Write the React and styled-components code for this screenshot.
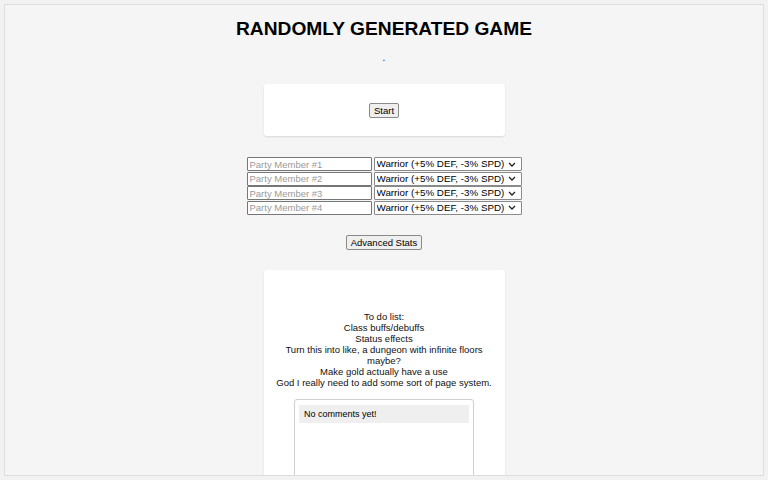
import React from 'react';
import styled, { createGlobalStyle } from 'styled-components';

const classes = [
  'Warrior (+5% DEF, -3% SPD)',
  'Mage (+5% MAG, -3% DEF)',
  'Rogue (+5% SPD, -3% ATK)',
  'Cleric (+5% HP, -3% ATK)',
];

const todo = [
  'To do list:',
  'Class buffs/debuffs',
  'Status effects',
  'Turn this into like, a dungeon with infinite floors maybe?',
  'Make gold actually have a use',
  'God I really need to add some sort of page system.',
];

const chevron =
  "url(\"data:image/svg+xml,%3Csvg xmlns='http://www.w3.org/2000/svg' width='8' height='5' viewBox='0 0 8 5'%3E%3Cpath d='M1 1l3 3 3-3' fill='none' stroke='%23222' stroke-width='1.3'/%3E%3C/svg%3E\")";

function App() {
  return (
    <>
      <GlobalStyle />
      <Frame>
        <Title>RANDOMLY GENERATED GAME</Title>
        <Dot>.</Dot>
        <Card $height={52} $top={20}>
          <Button>Start</Button>
        </Card>
        <Party>
          {[1, 2, 3, 4].map((n) => (
            <PartyRow key={n}>
              <NameInput placeholder={`Party Member #${n}`} />
              <ClassSelect defaultValue={classes[0]}>
                {classes.map((c) => (
                  <option key={c}>{c}</option>
                ))}
              </ClassSelect>
            </PartyRow>
          ))}
        </Party>
        <Button $top={20}>Advanced Stats</Button>
        <Card $top={20} $pad="41px 8px 0">
          <Notes>
            {todo.map((line) => (
              <div key={line}>{line}</div>
            ))}
          </Notes>
          <Comments>
            <CommentBar>No comments yet!</CommentBar>
          </Comments>
        </Card>
      </Frame>
    </>
  );
}

const GlobalStyle = createGlobalStyle`
  html, body {
    margin: 0;
    padding: 0;
    height: 480px;
    overflow: hidden;
    background: #f2f2f2;
  }
  body {
    font-family: 'Liberation Sans', Arial, sans-serif;
    color: #111;
  }
`;

const Frame = styled.div`
  box-sizing: border-box;
  margin: 4px;
  height: 472px;
  border: 1px solid #dcdcdc;
  background: #f5f5f5;
  overflow: hidden;
  display: flex;
  flex-direction: column;
  align-items: center;
`;

const Title = styled.h1`
  margin: 12px 0 0;
  font-size: 19.2px;
  line-height: 23px;
  font-weight: 700;
  color: #000;
`;

const Dot = styled.div`
  margin-top: 12px;
  font-size: 10px;
  line-height: 12px;
`;

const Card = styled.div`
  box-sizing: border-box;
  width: 241px;
  margin-top: ${(p) => p.$top || 0}px;
  ${(p) => (p.$height ? `height: ${p.$height}px;` : '')}
  padding: ${(p) => p.$pad || '0'};
  background: #fff;
  border-radius: 3px;
  box-shadow: 0 1px 2px rgba(0, 0, 0, 0.12);
  display: flex;
  flex-direction: column;
  align-items: center;
  justify-content: ${(p) => (p.$height ? 'center' : 'flex-start')};
  flex-shrink: 0;
`;

const Button = styled.button`
  margin-top: ${(p) => p.$top || 0}px;
  font-family: 'Liberation Sans', Arial, sans-serif;
  font-size: 9.5px;
  line-height: 11px;
  padding: 1px 4px;
  color: #000;
  background: #efefef;
  border: 1px solid #8a8a8a;
  border-radius: 2px;
`;

const Party = styled.div`
  margin-top: 21px;
  display: flex;
  flex-direction: column;
  gap: 0.5px;
`;

const PartyRow = styled.div`
  display: flex;
  gap: 2px;
`;

const NameInput = styled.input`
  box-sizing: border-box;
  width: 125px;
  height: 14px;
  padding: 0 2px;
  font-family: 'Liberation Sans', Arial, sans-serif;
  font-size: 9.5px;
  border: 1px solid #767676;
  border-radius: 1px;
  background: #fff;
  &::placeholder {
    color: #9a9a9a;
  }
`;

const ClassSelect = styled.select`
  box-sizing: border-box;
  width: 148px;
  height: 14px;
  padding: 0 12px 0 2px;
  appearance: none;
  font-family: 'Liberation Sans', Arial, sans-serif;
  font-size: 9.8px;
  line-height: 12px;
  color: #000;
  border: 1px solid #8a8a8a;
  border-radius: 1px;
  background: #fff ${chevron} no-repeat right 5px center;
`;

const Notes = styled.div`
  font-size: 9.5px;
  line-height: 11px;
  text-align: center;
  color: #111;
`;

const Comments = styled.div`
  box-sizing: border-box;
  width: 180px;
  height: 120px;
  margin-top: 11px;
  padding: 5px 4px;
  border: 1px solid #cfcfcf;
  border-radius: 3px;
  background: #fff;
  flex-shrink: 0;
`;

const CommentBar = styled.div`
  height: 18px;
  padding-left: 5px;
  font-size: 9px;
  line-height: 18px;
  background: #efefef;
  color: #000;
`;

export default App;
